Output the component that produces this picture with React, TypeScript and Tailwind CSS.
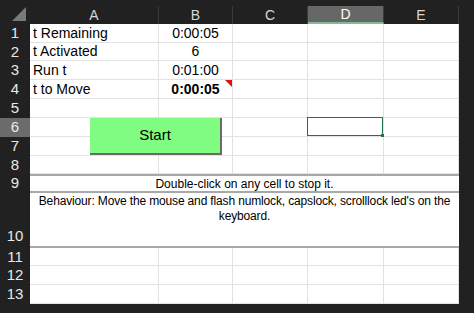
import React from "react";

const cols = ["A", "B", "C", "D", "E"];
const widths = ["w-[129px]", "w-[74px]", "w-[75px]", "w-[76px]", "w-[75px]"];

type Row = { n: number; h: string; a?: string; b?: string; bold?: boolean };

const top: Row[] = [
  { n: 1, h: "h-[19px]", a: "t Remaining", b: "0:00:05" },
  { n: 2, h: "h-[18px]", a: "t Activated", b: "6" },
  { n: 3, h: "h-[19px]", a: "Run t", b: "0:01:00" },
  { n: 4, h: "h-[19px]", a: "t to Move", b: "0:00:05", bold: true },
  { n: 5, h: "h-[19px]" },
  { n: 6, h: "h-[19px]" },
  { n: 7, h: "h-[19px]" },
  { n: 8, h: "h-[18px]" },
];

const bottom: Row[] = [
  { n: 11, h: "h-[18px]" },
  { n: 12, h: "h-[19px]" },
  { n: 13, h: "h-[19px]" },
];

const RowLabel = ({ n, active }: { n: number; active?: boolean }) => (
  <div
    className={`w-[30px] shrink-0 flex items-center justify-center text-[15px] text-[#e8e8e8] ${
      active ? "bg-[#6b6b6b]" : ""
    }`}
  >
    {n}
  </div>
);

const GridRow = ({ row }: { row: Row }) => (
  <div className={`flex ${row.h}`}>
    <RowLabel n={row.n} active={row.n === 6} />
    <div className="flex bg-white border-b border-[#e2e2e2]">
      {cols.map((c, i) => (
        <div
          key={c}
          className={`${widths[i]} relative border-r border-[#e2e2e2] flex items-center text-[14px] text-black ${
            i === 1 ? "justify-center" : "pl-[3px]"
          } ${row.bold && i === 1 ? "font-bold" : ""}`}
        >
          {i === 0 && row.a}
          {i === 1 && row.b}
          {i === 1 && row.n === 4 && (
            <span className="absolute right-0 top-0 w-0 h-0 border-t-[7px] border-l-[7px] border-t-[#e01010] border-l-transparent" />
          )}
          {i === 3 && row.n === 6 && (
            <span className="absolute -left-px -top-px right-0 bottom-0 border border-[#217346]">
              <span className="absolute -right-[2px] -bottom-[2px] w-[3px] h-[3px] bg-[#217346]" />
            </span>
          )}
        </div>
      ))}
    </div>
  </div>
);

export default function App() {
  return (
    <div
      className="w-[474px] h-[313px] bg-[#212121] overflow-hidden relative"
      style={{ fontFamily: '"Liberation Sans", Arial, sans-serif' }}
    >
      {/* column headers */}
      <div className="flex h-[24px] pt-[6px]">
        <div className="w-[30px] shrink-0 relative">
          <span className="absolute right-[4px] bottom-[3px] w-0 h-0 border-b-[14px] border-l-[14px] border-b-[#7a7a7a] border-l-transparent" />
        </div>
        {cols.map((c, i) => (
          <div
            key={c}
            className={`${widths[i]} flex items-center justify-center text-[14px] border-r border-[#3a3a3a] ${
              c === "D"
                ? "bg-[#656865] text-white border-b-2 border-b-[#88b898]"
                : "text-[#d8d8d8]"
            }`}
          >
            {c}
          </div>
        ))}
      </div>

      <div className="relative">
        {top.map((r) => (
          <GridRow key={r.n} row={r} />
        ))}

        {/* row 9 */}
        <div className="flex h-[19px]">
          <RowLabel n={9} />
          <div className="w-[429px] bg-white border-t-2 border-b-2 border-[#a8a8a8] flex items-center justify-center text-[12px] text-black">
            Double-click on any cell to stop it.
          </div>
        </div>

        {/* row 10 */}
        <div className="flex h-[55px]">
          <div className="w-[30px] shrink-0 flex items-end justify-center pb-[1px] text-[15px] text-[#e8e8e8]">
            10
          </div>
          <div className="w-[429px] bg-white border-b-2 border-[#a8a8a8] pt-[1px] text-center text-[12px] leading-[15px] tracking-[-0.15px] text-black">
            Behaviour: Move the mouse and flash numlock, capslock, scrolllock led's on the keyboard.
          </div>
        </div>

        {bottom.map((r) => (
          <GridRow key={r.n} row={r} />
        ))}

        {/* Start button */}
        <button className="absolute left-[90px] top-[94px] w-[132px] h-[37px] bg-[#80fd80] text-[15px] text-black border-r-2 border-b-2 border-[#6a6a6a]">
          Start
        </button>
      </div>
    </div>
  );
}
